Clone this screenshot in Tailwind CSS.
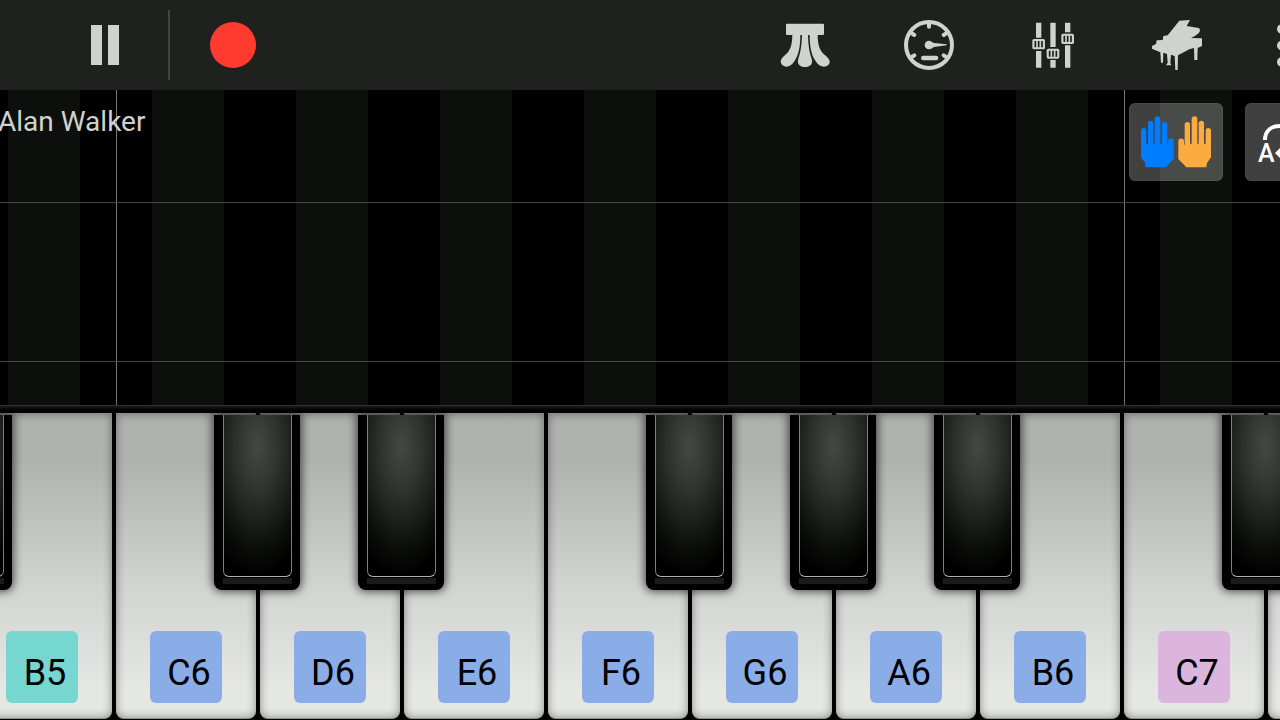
<!DOCTYPE html>
<html lang="en">
<head>
<meta charset="utf-8">
<title>Piano</title>
<meta name="viewport" content="width=device-width, initial-scale=1">
<script src="https://cdn.jsdelivr.net/npm/@tailwindcss/browser@4"></script>
</head>
<body class="flex h-screen flex-col overflow-hidden bg-black font-[Roboto,sans-serif]">

<header class="flex h-[90px] shrink-0 items-center overflow-hidden bg-[#1f211e] text-[#d0d2cf]">
  <button type="button" aria-label="Pause" class="ml-[75px] flex h-[60px] w-[60px] shrink-0 items-center justify-center">
    <svg class="h-10 w-7" viewBox="0 0 28 40" fill="currentColor"><path d="M0 0h11v40H0zM17 0h11v40H17z"/></svg>
  </button>
  <div class="ml-[33px] h-[70px] w-0.5 shrink-0 bg-[#434542]"></div>
  <button type="button" aria-label="Record" class="ml-10 h-[46px] w-[46px] shrink-0 rounded-full bg-[#ff3b2f]"></button>

  <nav aria-label="Tools" class="-mr-[45px] ml-auto flex shrink-0">
    <button type="button" aria-label="Sustain pedals" class="flex h-[90px] w-[124px] items-center justify-center">
      <svg class="h-[50px] w-[50px]" viewBox="60 60 150 150" fill="currentColor">
        <path d="M82 71h106q4 0 4 4v26q0 4-4 4H82q-4 0-4-4V75q0-4 4-4z"/>
        <path d="M97 104H121C121 140 116 164 103 184C94 200 78 204 68 196C58 186 62 176 73 167C90 154 97 136 97 104Z"/>
        <path d="M173 104H149C149 140 154 164 167 184C176 200 194 204 204 196C214 186 208 176 197 167C180 154 173 136 173 104Z"/>
        <path d="M126 104H144C145 140 149 158 155 176C160 192 150 201 135 201S110 192 115 176C121 158 125 140 126 104Z"/>
      </svg>
    </button>
    <button type="button" aria-label="Tempo" class="flex h-[90px] w-[124px] items-center justify-center">
      <svg class="h-[50px] w-[50px]" viewBox="0 0 150 150" fill="none" stroke="currentColor" stroke-linecap="round">
        <circle cx="75" cy="75" r="69" stroke-width="12"/>
        <path stroke-width="12" d="M75 10V20M25 41l6 4M125 41l-6 4M25 110l6-4M125 110l-6-4"/>
        <path stroke-width="14" d="M58 114h38"/>
        <path fill="currentColor" stroke="none" d="M75 62C81 62 85 67 90 69L128 73V76L90 81C85 83 81 88 75 88A13 13 0 0 1 75 62Z"/>
      </svg>
    </button>
    <button type="button" aria-label="Mixer" class="flex h-[90px] w-[124px] items-center justify-center">
      <svg class="h-[50px] w-[42px]" viewBox="66 61 126 150" fill="currentColor">
        <path d="M78 69h16v45H78zM78 154h16v50H78zM121 69h16v73h-16zM121 181h16v23h-16zM165 69h16v29h-16zM165 137h16v67h-16z"/>
        <rect x="67" y="118" width="38" height="31" rx="5"/>
        <rect x="110" y="147" width="38" height="30" rx="5"/>
        <rect x="154" y="102" width="38" height="31" rx="5"/>
        <path fill="none" stroke="#1f211e" stroke-width="5" d="M76 124v19M86 124v19M96 124v19M119 153v18M129 153v18M139 153v18M163 108v19M173 108v19M183 108v19"/>
      </svg>
    </button>
    <button type="button" aria-label="Instrument" class="flex h-[90px] w-[124px] items-center justify-center">
      <svg class="h-[50px] w-[50px]" viewBox="426 60 150 150" fill="currentColor">
        <path d="M426 138L438 132L440 121L458 120L460 108L473 106L508 62L540 60L530 78L566 84Q574 90 566 100Q556 109 543 114L576 115V138L563 144L562 180H553L552 144L538 148L504 166L503 210H496L494 168L483 164L481 188L484 196H468L473 188L471 162L460 158L459 188H453L451 157L426 146Z"/>
      </svg>
    </button>
    <button type="button" aria-label="More options" class="flex h-[90px] w-[86px] items-center justify-center">
      <svg class="h-[44px] w-[10px]" viewBox="0 0 10 44" fill="currentColor"><circle cx="5" cy="6" r="5"/><circle cx="5" cy="22.500" r="5"/><circle cx="5" cy="39" r="5"/></svg>
    </button>
  </nav>
</header>

<main class="grid min-h-0 flex-1 grid-cols-1 grid-rows-1 overflow-hidden">
  <!-- Note lanes -->
  <div class="col-start-1 row-start-1 -ml-[28px] flex">
    <div class="w-36 shrink-0 px-9"><div class="h-full bg-[#0d0f0c]"></div></div>
    <div class="w-36 shrink-0 border-l border-[#777976] pl-[35px] pr-9"><div class="h-full bg-[#0d0f0c]"></div></div>
    <div class="w-36 shrink-0 px-9"><div class="h-full bg-[#0d0f0c]"></div></div>
    <div class="w-36 shrink-0 px-9"><div class="h-full bg-[#0d0f0c]"></div></div>
    <div class="w-36 shrink-0 px-9"><div class="h-full bg-[#0d0f0c]"></div></div>
    <div class="w-36 shrink-0 px-9"><div class="h-full bg-[#0d0f0c]"></div></div>
    <div class="w-36 shrink-0 px-9"><div class="h-full bg-[#0d0f0c]"></div></div>
    <div class="w-36 shrink-0 px-9"><div class="h-full bg-[#0d0f0c]"></div></div>
    <div class="w-36 shrink-0 border-l border-[#777976] pl-[35px] pr-9"><div class="h-full bg-[#0d0f0c]"></div></div>
  </div>
  <!-- Beat lines -->
  <div class="col-start-1 row-start-1 flex flex-col">
    <div class="h-[113px] shrink-0 border-b border-[#454744]"></div>
    <div class="h-[159px] shrink-0 border-b border-[#454744]"></div>
  </div>
  <div class="col-start-1 row-start-1 flex items-start justify-between">
    <h1 class="-ml-0.5 mt-4 text-[28px] leading-8 text-[#d0d2cf]">Alan Walker</h1>
    <div class="-mr-[59px] mt-[13px] flex shrink-0 gap-[22px]">
      <button type="button" aria-label="Both hands" class="flex h-[78px] w-[94px] items-center justify-center rounded-md border border-white/5 bg-white/25">
        <svg class="h-[52px] w-[70px]" viewBox="93 79 210 156">
          <defs>
            <path id="hand" d="M93 203V123a8 8 0 0 1 16 0V162H114V101a8 8 0 0 1 16 0V162H134V88a8.500 8.500 0 0 1 17 0V162H156V105a8 8 0 0 1 16 0V165H174V155a8.500 8.500 0 0 1 17 0V208L167 233H107L105 220Z"/>
          </defs>
          <use href="#hand" fill="#007dff"/>
          <use href="#hand" fill="#fcab40" transform="translate(396 0) scale(-1 1)"/>
        </svg>
      </button>
      <button type="button" aria-label="Loop A to B" class="flex h-[78px] w-[94px] items-center justify-center rounded-md border border-white/5 bg-white/25 pt-0.5 text-white">
        <svg class="h-[52px] w-[68px]" viewBox="0 0 68 52" fill="none" stroke="currentColor">
          <path stroke-width="4" d="M7 23C7 14 13 9 22 9H46C55 9 61 14 61 23"/>
          <path fill="currentColor" stroke="none" d="M17 36l7-7v5h20v-5l7 7-7 7v-5H24v5z"/>
          <text x="0" y="45" fill="currentColor" stroke="none" font-family="Roboto" font-size="25" font-weight="500">A</text>
        </svg>
      </button>
    </div>
  </div>
</main>

<div class="h-2 shrink-0 border-t border-[#30322f] bg-gradient-to-b from-[#1b1d1a] to-black"></div>

<div class="h-[307px] shrink-0 overflow-hidden">
  <section id="keys" aria-label="Keyboard" class="-ml-[172px] flex h-full bg-black"></section>
</div>

<script>
  const LABELS = {
    teal: "bg-[#75d7d0]",
    blue: "bg-[#8aade8]",
    pink: "bg-[#dbb5de]",
  };
  // [label, label colour, has a black key on its right]
  const KEYS = [
    ["", "", true], ["B5", "teal", false], ["C6", "blue", true], ["D6", "blue", true],
    ["E6", "blue", false], ["F6", "blue", true], ["G6", "blue", true], ["A6", "blue", true],
    ["B6", "blue", false], ["C7", "pink", true], ["", "", false],
  ];
  document.getElementById("keys").innerHTML = KEYS.map(([label, colour, sharp]) => `
    <div class="relative h-full w-36 shrink-0 pr-1 pb-px">
      <button type="button" class="flex h-full w-full items-end justify-center rounded-b-lg border-t border-b border-t-[#8c8e8b] border-b-[#8c8e8b] bg-linear-to-b from-[#b0b2af] from-15% via-[#d3d5d2] via-58% to-[#e5e7e3] to-90% pb-[15px] shadow-[inset_0_0_10px_rgba(0,0,0,0.4)]">
        ${label ? `<span class="flex h-[72px] w-[72px] items-center justify-center rounded-md pt-3 pl-1.5 text-4xl text-black ${LABELS[colour]}">${label}</span>` : ""}
      </button>
      ${sharp ? `
      <button type="button" aria-label="Black key" class="absolute top-0.5 -right-[40px] z-10 flex h-[175px] w-[86px] flex-col items-center rounded-b-lg bg-black pb-1.5 shadow-[0_0_9px_2px_rgba(0,0,0,0.6)]">
        <span class="w-[69px] flex-1 rounded-b-md border border-t-0 border-[#7b7d7a] border-b-[#b0b2af] bg-[radial-gradient(ellipse_90%_80%_at_50%_20%,#464845,#30322f_35%,#0b0d0a_80%,#000_100%)]"></span>
        <span class="mt-px h-1.5 w-[69px] bg-[#191b18]"></span>
      </button>` : ""}
    </div>`).join("");
</script>
</body>
</html>
